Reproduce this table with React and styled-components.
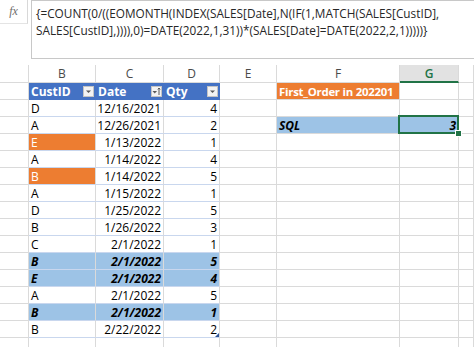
import React from 'react';
import styled, { createGlobalStyle, css } from 'styled-components';

const GlobalStyle = createGlobalStyle`
  html, body {
    margin: 0;
    padding: 0;
    background: #ffffff;
    overflow: hidden;
  }
  body {
    font-family: 'Open Sans', 'Noto Sans', sans-serif;
  }
`;

const GRID = '#dadada';
const TABLE_LINE = '#c9d7ee';
const HEAD_BLUE = '#4472c4';
const ROW_BLUE = '#9dc3e6';
const ORANGE = '#ed7d31';
const EXCEL_GREEN = '#217346';

const formula = [
  '{=COUNT(0/((EOMONTH(INDEX(SALES[Date],N(IF(1,MATCH(SALES[CustID],',
  'SALES[CustID],)))),0)=DATE(2022,1,31))*(SALES[Date]=DATE(2022,2,1)))))}',
];

const columns = ['', 'B', 'C', 'D', 'E', 'F', 'G', ''];

const sales = [
  { id: 'D', date: '12/16/2021', qty: 4 },
  { id: 'A', date: '12/26/2021', qty: 2 },
  { id: 'E', date: '1/13/2022', qty: 1, first: true },
  { id: 'A', date: '1/14/2022', qty: 4 },
  { id: 'B', date: '1/14/2022', qty: 5, first: true },
  { id: 'A', date: '1/15/2022', qty: 1 },
  { id: 'D', date: '1/25/2022', qty: 5 },
  { id: 'B', date: '1/26/2022', qty: 3 },
  { id: 'C', date: '2/1/2022', qty: 1 },
  { id: 'B', date: '2/1/2022', qty: 5, hit: true },
  { id: 'E', date: '2/1/2022', qty: 4, hit: true },
  { id: 'A', date: '2/1/2022', qty: 5 },
  { id: 'B', date: '2/1/2022', qty: 1, hit: true },
  { id: 'B', date: '2/22/2022', qty: 2 },
];

const FormulaBar = styled.div`
  display: flex;
  height: 59px;
  margin-bottom: 6px;
`;

const FxBox = styled.div`
  width: 27px;
  height: 23px;
  border-right: 1px solid #d8d8d8;
  border-bottom: 1px solid #e4e4e4;
  display: flex;
  align-items: center;
  justify-content: center;
  font-family: 'Liberation Serif', 'DejaVu Serif', serif;
  font-style: italic;
  font-size: 12px;
  color: #6d6d6d;
  margin-right: 3px;
`;

const FormulaInput = styled.div`
  flex: 1;
  border: 1px solid #c8c8c8;
  border-right: none;
  padding: 4px 0 0 4px;
  font-family: 'Open Sans', sans-serif;
  font-size: 11.8px;
  line-height: 17px;
  color: #262626;
  white-space: nowrap;
  overflow: hidden;
`;

const Sheet = styled.div`
  display: grid;
  grid-template-columns: 29px 67px 68px 56px 57px 123px 59px 1fr;
  grid-template-rows: 18px;
  grid-auto-rows: 17px;
  font-family: 'Open Sans', sans-serif;
  font-size: 12px;
  color: #000000;
`;

const ColHead = styled.div`
  box-sizing: border-box;
  display: flex;
  align-items: center;
  justify-content: center;
  border-right: 1px solid ${GRID};
  border-bottom: 1px solid ${GRID};
  color: #4a4a4a;
  font-size: 12px;
  ${(p) =>
    p.$active &&
    css`
      background: #e2e2e2;
      color: ${EXCEL_GREEN};
      font-weight: 600;
      border-bottom: 2px solid ${EXCEL_GREEN};
    `}
`;

const Cell = styled.div`
  position: relative;
  box-sizing: border-box;
  display: flex;
  align-items: center;
  justify-content: ${(p) => (p.$right ? 'flex-end' : 'flex-start')};
  padding: 0 ${(p) => (p.$right ? '2px' : '0')} 0 2px;
  border-right: 1px solid ${GRID};
  border-bottom: 1px solid ${(p) => p.$line || GRID};
  background: ${(p) => p.$fill || 'transparent'};
  color: ${(p) => p.$ink || '#000000'};
  font-weight: ${(p) => (p.$bold ? 700 : 400)};
  font-style: ${(p) => (p.$italic ? 'italic' : 'normal')};
  white-space: nowrap;
  ${(p) =>
    p.$selected &&
    css`
      &::after {
        content: '';
        position: absolute;
        left: -2px;
        top: -2px;
        right: -1px;
        bottom: -1px;
        border: 2px solid ${EXCEL_GREEN};
        pointer-events: none;
      }
    `}
`;

const LabelCell = styled(Cell)`
  font-size: 11.4px;
  letter-spacing: -0.25px;
  overflow: hidden;
`;

const HeadCell = styled(Cell)`
  justify-content: space-between;
  background: ${HEAD_BLUE};
  border-right-color: ${HEAD_BLUE};
  border-bottom-color: ${HEAD_BLUE};
  color: #ffffff;
  font-weight: 700;
  padding-right: 1px;
`;

const FilterButton = styled.span`
  width: 11px;
  height: 11px;
  box-sizing: border-box;
  background: #f3f3f3;
  border: 1px solid #c4c4c4;
  display: flex;
  align-items: center;
  justify-content: center;
`;

const FillHandle = styled.span`
  position: absolute;
  right: -4px;
  bottom: -4px;
  width: 5px;
  height: 5px;
  background: ${EXCEL_GREEN};
  border: 1px solid #ffffff;
  z-index: 2;
`;

const ResizeCorner = styled.span`
  position: absolute;
  right: 0;
  bottom: 0;
  width: 0;
  height: 0;
  border-left: 4px solid transparent;
  border-bottom: 4px solid #2f5597;
`;

const Caret = () => (
  <svg width="7" height="7" viewBox="0 0 7 7">
    <path d="M1 2.5h5L3.5 5z" fill="#595959" />
  </svg>
);

const SortCaret = () => (
  <svg width="9" height="9" viewBox="0 0 9 9">
    <path d="M0.5 4h4.5L2.75 6.5z" fill="#595959" />
    <path d="M7 1v7M5.8 2.4L7 1l1.2 1.4" stroke="#595959" strokeWidth="1" fill="none" />
  </svg>
);

const blank = (key, line) => <Cell key={key} $line={line} />;

const App = () => {
  const rows = [];

  // table header row, plus the label in F
  rows.push(
    blank('h-a'),
    <HeadCell key="h-b">
      CustID
      <FilterButton>
        <Caret />
      </FilterButton>
    </HeadCell>,
    <HeadCell key="h-c">
      Date
      <FilterButton>
        <SortCaret />
      </FilterButton>
    </HeadCell>,
    <HeadCell key="h-d">
      Qty
      <FilterButton>
        <Caret />
      </FilterButton>
    </HeadCell>,
    blank('h-e'),
    <LabelCell key="h-f" $fill={ORANGE} $ink="#ffffff" $bold $line={GRID}>
      First_Order in 202201
    </LabelCell>,
    blank('h-g'),
    blank('h-h')
  );

  sales.forEach((r, i) => {
    const fill = r.hit ? ROW_BLUE : undefined;
    const last = i === sales.length - 1;
    const k = `r${i}`;
    rows.push(
      blank(`${k}-a`),
      <Cell
        key={`${k}-b`}
        $fill={r.first ? ORANGE : fill}
        $ink={r.first ? '#ffffff' : '#000000'}
        $bold={r.hit}
        $italic={r.hit}
        $line={TABLE_LINE}
      >
        {r.id}
      </Cell>,
      <Cell key={`${k}-c`} $right $fill={fill} $bold={r.hit} $italic={r.hit} $line={TABLE_LINE}>
        {r.date}
      </Cell>,
      <Cell key={`${k}-d`} $right $fill={fill} $bold={r.hit} $italic={r.hit} $line={TABLE_LINE}>
        {r.qty}
        {last && <ResizeCorner />}
      </Cell>,
      blank(`${k}-e`)
    );
    if (i === 1) {
      rows.push(
        <Cell key={`${k}-f`} $fill={ROW_BLUE} $bold $italic>
          SQL
        </Cell>,
        <Cell key={`${k}-g`} $right $fill={ROW_BLUE} $bold $italic $selected>
          3
          <FillHandle />
        </Cell>
      );
    } else {
      rows.push(blank(`${k}-f`), blank(`${k}-g`));
    }
    rows.push(blank(`${k}-h`));
  });

  for (let c = 0; c < 8; c++) rows.push(blank(`tail-${c}`));

  return (
    <>
      <GlobalStyle />
      <FormulaBar>
        <FxBox>fx</FxBox>
        <FormulaInput>
          {formula[0]}
          <br />
          {formula[1]}
        </FormulaInput>
      </FormulaBar>
      <Sheet>
        {columns.map((c, i) => (
          <ColHead key={`col-${i}`} $active={c === 'G'}>
            {c}
          </ColHead>
        ))}
        {rows}
      </Sheet>
    </>
  );
};

export default App;
